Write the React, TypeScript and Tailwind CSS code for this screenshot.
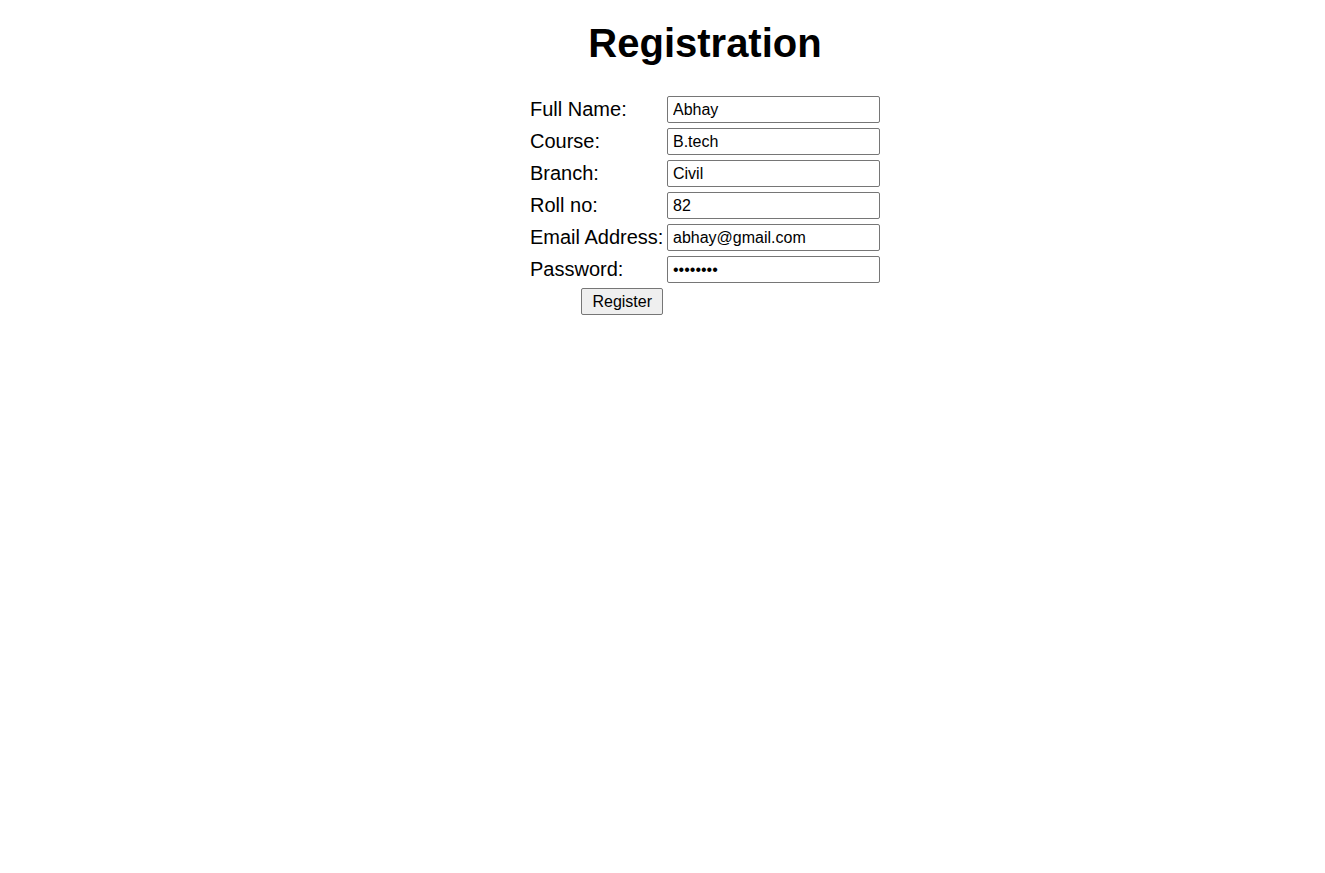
import React from "react";

const rows: { label: string; value: string; type?: string }[] = [
  { label: "Full Name:", value: "Abhay" },
  { label: "Course:", value: "B.tech" },
  { label: "Branch:", value: "Civil" },
  { label: "Roll no:", value: "82" },
  { label: "Email Address:", value: "abhay@gmail.com" },
  { label: "Password:", value: "abcdefgh", type: "password" },
];

export default function App() {
  return (
    <div className="min-h-[873px] w-full bg-white text-black font-['Liberation_Sans',Arial,sans-serif]">
      <div className="flex flex-col items-center pl-[85px]">
        <h1 className="mt-[20px] text-[40px] leading-[46px] font-bold">Registration</h1>
        <div className="mt-[30px] grid grid-cols-[133px_213px] gap-x-[4px] gap-y-[5px] items-center">
          {rows.map((r) => (
            <React.Fragment key={r.label}>
              <label className="text-[20px] leading-[23px] whitespace-nowrap">{r.label}</label>
              <input
                type={r.type ?? "text"}
                defaultValue={r.value}
                className="h-[27px] w-[213px] rounded-[2px] border border-[#767676] px-[5px] text-[16px] leading-[18px] text-black outline-none"
              />
            </React.Fragment>
          ))}
          <div className="flex justify-end">
            <button className="h-[27px] rounded-[2px] border border-[#767676] bg-[#efefef] px-[10px] text-[16px] leading-[18px] text-black">
              Register
            </button>
          </div>
          <div />
        </div>
      </div>
    </div>
  );
}
